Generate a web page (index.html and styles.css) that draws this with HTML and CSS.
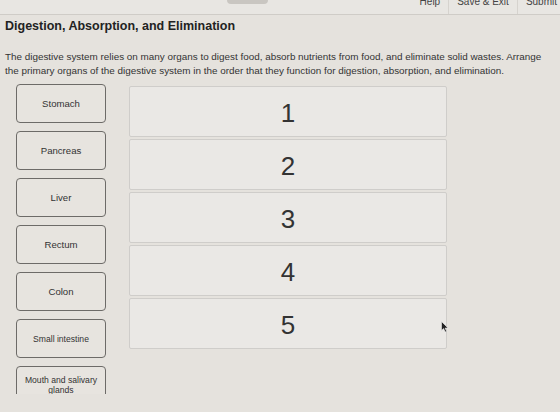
FILE: index.html
```html
<!DOCTYPE html>
<html lang="en">
<head>
    <meta charset="UTF-8">
    <meta name="viewport" content="width=device-width, initial-scale=1.0">
    <title>Digestion, Absorption, and Elimination</title>
    <link rel="stylesheet" href="styles.css">
</head>
<body>
    <div class="topbar">
        <div class="handle"></div>
        <div class="actions">
            <span class="action">Help</span>
            <span class="action">Save &amp; Exit</span>
            <span class="action">Submit</span>
        </div>
    </div>

    <div class="content">
        <h1 class="title">Digestion, Absorption, and Elimination</h1>
        <p class="prompt">The digestive system relies on many organs to digest food, absorb nutrients from food, and eliminate solid wastes. Arrange the primary organs of the digestive system in the order that they function for digestion, absorption, and elimination.</p>

        <div class="exercise">
            <div class="choices">
                <div class="choice">Stomach</div>
                <div class="choice">Pancreas</div>
                <div class="choice">Liver</div>
                <div class="choice">Rectum</div>
                <div class="choice">Colon</div>
                <div class="choice small">Small intestine</div>
                <div class="choice small tall">Mouth and salivary glands</div>
            </div>

            <div class="slots">
                <div class="slot">1</div>
                <div class="slot">2</div>
                <div class="slot">3</div>
                <div class="slot">4</div>
                <div class="slot">5</div>
            </div>
        </div>
    </div>

    <!-- mouse pointer resting beside slot 5 -->
    <svg class="pointer" width="8" height="12" viewBox="0 0 8 12">
        <path d="M0.5 0.5 L0.5 9.5 L2.6 7.6 L4.2 11 L5.6 10.3 L4.1 7.1 L7 7 Z" fill="#222" stroke="#eee" stroke-width="0.6"/>
    </svg>
</body>
</html>
```

FILE: styles.css
```css
body {
    font-family: 'Liberation Sans', Arial, sans-serif;
    margin: 0;
    background: #e5e2dd;
    color: #2b2b2b;
    width: 560px;
    height: 412px;
    overflow: hidden;
    position: relative;
}
.topbar {
    height: 14px;
    border-bottom: 1px solid #cfccc7;
    display: flex;
    justify-content: space-between;
    align-items: flex-end;
    background: #e8e6e2;
}
.handle {
    width: 41px;
    height: 4px;
    margin-left: 227px;
    align-self: flex-start;
    background: #c9c6c1;
    border-radius: 0 0 4px 4px;
}
.actions {
    display: flex;
    align-items: flex-start;
    height: 14px;
}
.action {
    font-size: 10px;
    color: #444;
    padding: 0 8px;
    line-height: 10px;
    margin-top: -3px;
    height: 17px;
    border-left: 1px solid #d6d3ce;
}
.action:first-child {
    border-left: none;
}
.action:last-child {
    padding-right: 3px;
}
.content {
    padding: 0 5px;
}
.title {
    font-size: 12.5px;
    font-weight: bold;
    color: #222;
    margin: 2px 0 0;
    line-height: 18px;
}
.prompt {
    font-size: 9.9px;
    line-height: 14px;
    color: #333;
    margin: 15px 0 0;
}
.exercise {
    display: grid;
    grid-template-columns: 90px 318px;
    column-gap: 23px;
    padding-left: 11px;
    margin-top: 6px;
}
.choices {
    display: flex;
    flex-direction: column;
    gap: 8px;
    height: 310px;
    overflow: hidden;
}
.choice {
    height: 39px;
    flex-shrink: 0;
    border: 1px solid #6d6b68;
    border-radius: 4px;
    box-sizing: border-box;
    display: flex;
    align-items: center;
    justify-content: center;
    text-align: center;
    font-size: 9.6px;
    color: #333;
    background: #e7e4df;
}
.small {
    font-size: 8.6px;
}
.tall {
    height: 44px;
    align-items: flex-start;
    padding: 8px 2px 0;
    line-height: 10px;
}
.slots {
    display: flex;
    flex-direction: column;
    gap: 2px;
    margin-top: 2px;
}
.slot {
    height: 51px;
    border: 1px solid #cfcdca;
    border-radius: 2px;
    box-sizing: border-box;
    background: #eae8e5;
    display: flex;
    align-items: center;
    justify-content: center;
    font-size: 26px;
    color: #333;
    padding-top: 4px;
}
.pointer {
    position: absolute;
    left: 441px;
    top: 321px;
}
```
